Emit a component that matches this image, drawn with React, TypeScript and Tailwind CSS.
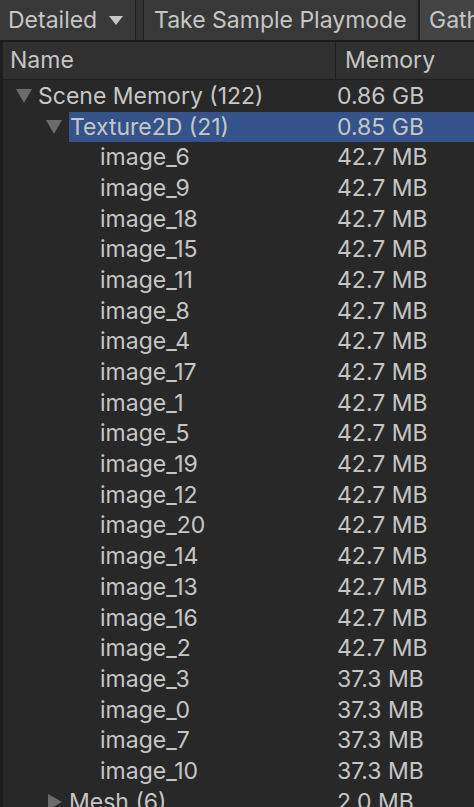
import React from "react";

const images: [string, string][] = [
  ["image_6", "42.7 MB"],
  ["image_9", "42.7 MB"],
  ["image_18", "42.7 MB"],
  ["image_15", "42.7 MB"],
  ["image_11", "42.7 MB"],
  ["image_8", "42.7 MB"],
  ["image_4", "42.7 MB"],
  ["image_17", "42.7 MB"],
  ["image_1", "42.7 MB"],
  ["image_5", "42.7 MB"],
  ["image_19", "42.7 MB"],
  ["image_12", "42.7 MB"],
  ["image_20", "42.7 MB"],
  ["image_14", "42.7 MB"],
  ["image_13", "42.7 MB"],
  ["image_16", "42.7 MB"],
  ["image_2", "42.7 MB"],
  ["image_3", "37.3 MB"],
  ["image_0", "37.3 MB"],
  ["image_7", "37.3 MB"],
  ["image_10", "37.3 MB"],
];

function Open() {
  return (
    <svg width="16" height="14" viewBox="0 0 16 14" className="shrink-0">
      <path d="M0 0 L16 0 L8 14 Z" fill="#6b6b6b" />
    </svg>
  );
}

function Closed() {
  return (
    <svg width="14" height="16" viewBox="0 0 14 16" className="shrink-0">
      <path d="M0 0 L14 8 L0 16 Z" fill="#6b6b6b" />
    </svg>
  );
}

export default function App() {
  return (
    <div
      className="w-[474px] h-[807px] overflow-hidden bg-[#282828] text-[#c6c6c6] text-[23px] leading-none"
      style={{ fontFamily: "Inter, 'Noto Sans', sans-serif" }}
    >
      {/* toolbar */}
      <div className="flex h-[42px] bg-[#383838] border-b-2 border-[#1c1c1c] overflow-hidden">
        <div className="flex w-[136px] shrink-0 items-center gap-[12px] pl-[8px] border-r border-[#1f1f1f]">
          <span>Detailed</span>
          <svg width="14" height="9" viewBox="0 0 14 9">
            <path d="M0 0 L14 0 L7 9 Z" fill="#c6c6c6" />
          </svg>
        </div>
        <div className="w-[8px] shrink-0 bg-[#333333] border-r border-[#1f1f1f]" />
        <div className="flex w-[276px] shrink-0 items-center pl-[10px] border-r-2 border-[#1f1f1f] whitespace-nowrap">
          Take Sample Playmode
        </div>
        <div className="flex flex-1 items-center pl-[9px] bg-[#444444] whitespace-nowrap overflow-hidden">
          Gath
        </div>
      </div>
      {/* header */}
      <div className="flex h-[38px] bg-[#303030] border-b border-[#1e1e1e] border-l-[3px] border-l-[#1e1e1e]">
        <div className="flex w-[333px] items-center pl-[7px] border-r border-[#1e1e1e]">Name</div>
        <div className="flex flex-1 items-center pl-[9px]">Memory</div>
      </div>
      {/* tree */}
      <div className="border-l-[3px] border-[#1e1e1e] pt-[1px]">
        <div className="flex h-[30.7px] items-center">
          <div className="flex w-[333px] items-center pl-[13px] gap-[6px] whitespace-nowrap">
            <Open />
            <span>Scene Memory (122)</span>
          </div>
          <div className="pl-[1px]">0.86 GB</div>
        </div>
        <div className="flex h-[30.7px] items-center">
          <div className="flex w-[66px] shrink-0 items-center pl-[43px]">
            <Open />
          </div>
          <div className="flex h-full flex-1 items-center bg-[#34538a]">
            <div className="w-[267px] shrink-0 pl-[1px] whitespace-nowrap">Texture2D (21)</div>
            <div className="pl-[1px]">0.85 GB</div>
          </div>
        </div>
        {images.map(([n, m]) => (
          <div key={n} className="flex h-[30.7px] items-center">
            <div className="w-[333px] shrink-0 pl-[97px] whitespace-nowrap">{n}</div>
            <div className="pl-[1px]">{m}</div>
          </div>
        ))}
        <div className="flex h-[30.7px] items-center">
          <div className="flex w-[333px] items-center pl-[45px] gap-[7px] whitespace-nowrap">
            <Closed />
            <span>Mesh (6)</span>
          </div>
          <div className="pl-[1px]">2.0 MB</div>
        </div>
      </div>
    </div>
  );
}
